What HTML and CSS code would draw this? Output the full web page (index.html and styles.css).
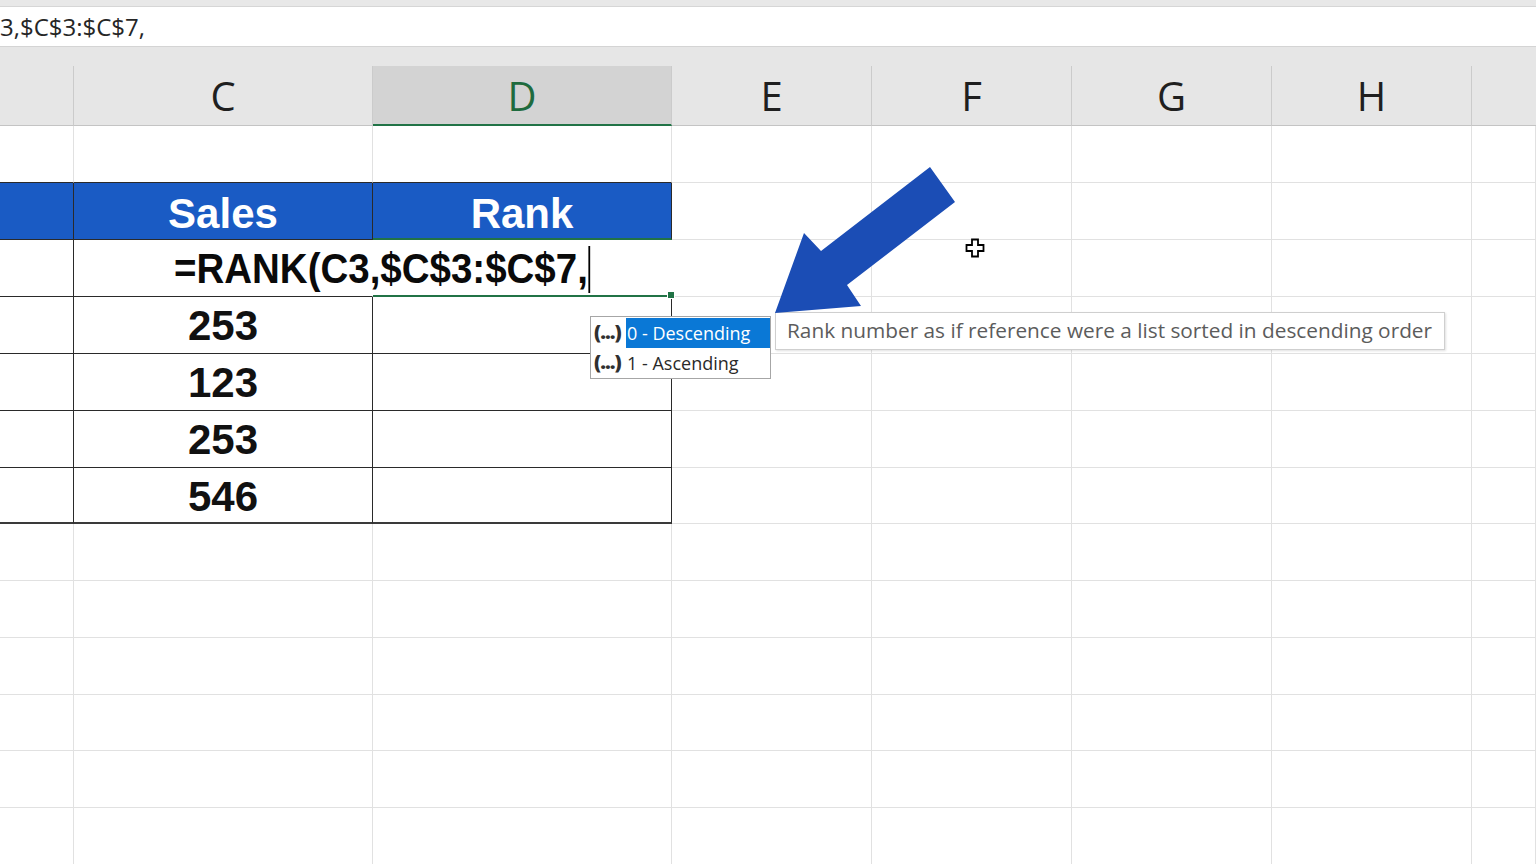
FILE: index.html
```html
<!DOCTYPE html>
<html>
<head>
<meta charset="utf-8">
<link rel="stylesheet" href="styles.css">
</head>
<body>
<div class="topstrip"></div>
<div class="fbar">3,$C$3:$C$7,</div>
<div class="colheads">
  <div class="ch"></div>
  <div class="ch">C</div>
  <div class="ch sel">D</div>
  <div class="ch">E</div>
  <div class="ch">F</div>
  <div class="ch">G</div>
  <div class="ch">H</div>
  <div class="ch last"></div>
</div>
<div class="grid">
  <!-- row 1 -->
  <div class="c tb"></div><div class="c tb"></div><div class="c tb"></div><div class="c"></div><div class="c"></div><div class="c"></div><div class="c"></div><div class="c"></div>
  <!-- row 2 header -->
  <div class="c hd"></div><div class="c hd">Sales</div><div class="c hd act">Rank</div><div class="c"></div><div class="c"></div><div class="c"></div><div class="c"></div><div class="c"></div>
  <!-- row 3 formula -->
  <div class="c bx"></div>
  <div class="c edit"><span class="formula">=RANK(C3,$C$3:$C$7,<span class="caret"></span></span></div>
  <div class="c active"></div>
  <div class="c"></div><div class="c"></div><div class="c"></div><div class="c"></div><div class="c"></div>
  <!-- rows 4-7 data -->
  <div class="c bx"></div><div class="c bx num">253</div><div class="c bx"></div><div class="c"></div><div class="c"></div><div class="c"></div><div class="c"></div><div class="c"></div>
  <div class="c bx"></div><div class="c bx num">123</div><div class="c bx"></div><div class="c"></div><div class="c"></div><div class="c"></div><div class="c"></div><div class="c"></div>
  <div class="c bx"></div><div class="c bx num">253</div><div class="c bx"></div><div class="c"></div><div class="c"></div><div class="c"></div><div class="c"></div><div class="c"></div>
  <div class="c bx bot"></div><div class="c bx bot num">546</div><div class="c bx bot"></div><div class="c"></div><div class="c"></div><div class="c"></div><div class="c"></div><div class="c"></div>
  <!-- rows 8-13 -->
  <div class="c"></div><div class="c"></div><div class="c"></div><div class="c"></div><div class="c"></div><div class="c"></div><div class="c"></div><div class="c"></div>
  <div class="c"></div><div class="c"></div><div class="c"></div><div class="c"></div><div class="c"></div><div class="c"></div><div class="c"></div><div class="c"></div>
  <div class="c"></div><div class="c"></div><div class="c"></div><div class="c"></div><div class="c"></div><div class="c"></div><div class="c"></div><div class="c"></div>
  <div class="c"></div><div class="c"></div><div class="c"></div><div class="c"></div><div class="c"></div><div class="c"></div><div class="c"></div><div class="c"></div>
  <div class="c"></div><div class="c"></div><div class="c"></div><div class="c"></div><div class="c"></div><div class="c"></div><div class="c"></div><div class="c"></div>
  <div class="c"></div><div class="c"></div><div class="c"></div><div class="c"></div><div class="c"></div><div class="c"></div><div class="c"></div><div class="c"></div>
</div>

<div class="dropdown">
  <div class="opt sel"><span class="ico">(...)</span><span class="lbl">0 - Descending</span></div>
  <div class="opt"><span class="ico">(...)</span><span class="lbl">1 - Ascending</span></div>
</div>

<div class="tooltip">Rank number as if reference were a list sorted in descending order</div>

<svg class="arrow" width="190" height="158" viewBox="0 0 190 158">
  <polygon points="5,153 34,73 51,91 160,7 185,42 77,125 91,146" fill="#1b4db5"/>
</svg>

<svg class="cursor" width="20" height="20" viewBox="0 0 20 20">
  <polygon points="7,1.5 13,1.5 13,7 18.5,7 18.5,13 13,13 13,18.5 7,18.5 7,13 1.5,13 1.5,7 7,7" fill="#fff" stroke="#000" stroke-width="1.8" stroke-linejoin="miter"/>
</svg>
</body>
</html>
```

FILE: styles.css
```css
* { box-sizing: border-box; }
html, body { margin: 0; padding: 0; }
body {
  width: 1536px;
  height: 864px;
  overflow: hidden;
  background: #fff;
  position: relative;
  font-family: "Open Sans", "Noto Sans", sans-serif;
  color: #222;
}
.topstrip {
  height: 7px;
  background: #e8e8e8;
  border-bottom: 1px solid #d6d6d6;
}
.fbar {
  height: 40px;
  padding-top: 2px;
  background: #fff;
  border-bottom: 1px solid #d4d4d4;
  font-size: 24px;
  line-height: 36px;
  color: #262626;
  white-space: nowrap;
}
.colheads {
  display: grid;
  grid-template-columns: 74px 299px 299px 200px 200px 200px 200px 64px;
  background: #e6e6e6;
  padding-top: 19px;
}
.ch {
  height: 60px;
  border-right: 1px solid #cbcbcb;
  border-bottom: 1px solid #c4c4c4;
  text-align: center;
  font-size: 40px;
  line-height: 60px;
  color: #1f1f1f;
}
.ch.sel {
  background: #d3d3d3;
  border-bottom: 2px solid #217346;
  color: #1e6b3e;
}
.ch.last { border-right: none; }
.grid {
  display: grid;
  grid-template-columns: 74px 299px 299px 200px 200px 200px 200px 64px;
  grid-template-rows: 57px 57px 57px 57px 57px 57px 56px 57px 57px 57px 56px 57px 57px;
}
.c {
  border-right: 1px solid #e1e1e1;
  border-bottom: 1px solid #e1e1e1;
}
.tb { border-bottom-color: #2a2a2a; }
.hd {
  background: #1a5bc4;
  color: #fff;
  font-family: "Liberation Sans", Arial, sans-serif;
  font-weight: bold;
  font-size: 42px;
  line-height: 61px;
  text-align: center;
  border-right-color: #2a2a2a;
  border-bottom-color: #2a2a2a;
}
.hd.act { border-bottom: 2px solid #217346; }
.bx {
  border-right-color: #2a2a2a;
  border-bottom-color: #2a2a2a;
}
.bot { border-bottom: 2px solid #3a3a3a; }
.num {
  font-family: "Liberation Sans", Arial, sans-serif;
  font-weight: bold;
  font-size: 42px;
  line-height: 58px;
  text-align: center;
  color: #111;
}
.edit {
  border-right-color: #fff;
  border-bottom-color: #2a2a2a;
  padding-left: 100px;
  white-space: nowrap;
  overflow: visible;
  position: relative;
  z-index: 1;
}
.formula {
  display: inline-block;
  font-family: "Liberation Sans", Arial, sans-serif;
  font-weight: bold;
  font-size: 43px;
  line-height: 57px;
  color: #0a0a0a;
  transform: scaleX(0.895);
  transform-origin: left center;
}
.caret {
  display: inline-block;
  width: 2px;
  height: 47px;
  background: #000;
  margin-left: 1px;
  vertical-align: -10px;
}
.active {
  border-right-color: #fff;
  border-bottom: 2px solid #217346;
  position: relative;
}
.active::after {
  content: "";
  position: absolute;
  right: -4px;
  bottom: -4px;
  width: 6px;
  height: 6px;
  background: #217346;
  border: 1px solid #fff;
}
.dropdown {
  position: absolute;
  left: 590px;
  top: 316px;
  width: 181px;
  height: 63px;
  background: #fff;
  border: 1px solid #a6a6a6;
  padding: 1px 0 1px 3px;
  z-index: 3;
}
.opt {
  display: flex;
  height: 30px;
  align-items: stretch;
}
.ico {
  width: 32px;
  font-weight: 800;
  font-size: 20px;
  line-height: 27px;
  letter-spacing: -1px;
  color: #303030;
  white-space: nowrap;
}
.lbl {
  flex: 1;
  font-size: 18px;
  line-height: 30px;
  color: #2a2a2a;
  white-space: nowrap;
  padding-left: 1px;
}
.opt.sel .lbl {
  background: #0a78d6;
  color: #fff;
}
.tooltip {
  position: absolute;
  left: 775px;
  top: 312px;
  width: 670px;
  height: 38px;
  background: #fff;
  border: 1px solid #cfcfcf;
  box-shadow: 1px 1px 2px rgba(0,0,0,0.12);
  padding-left: 11px;
  font-size: 20.8px;
  line-height: 35px;
  color: #5c5c5c;
  white-space: nowrap;
  z-index: 3;
}
.arrow {
  position: absolute;
  left: 770px;
  top: 160px;
  z-index: 4;
}
.cursor {
  position: absolute;
  left: 965px;
  top: 238px;
  z-index: 4;
}
```
